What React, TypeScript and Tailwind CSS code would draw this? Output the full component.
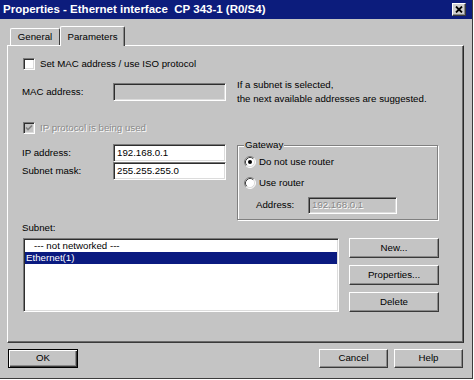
import React from 'react'

const sunken = "border border-t-[#7a7a7a] border-l-[#7a7a7a] border-b-white border-r-white shadow-[inset_1px_1px_0_#2e2e2e,inset_-1px_-1px_0_#dcdcdc]"
const raised = "border border-t-white border-l-white border-b-[#3a3a3a] border-r-[#3a3a3a] shadow-[inset_-1px_-1px_0_#8a8a8a]"

function Checkbox({ checked, disabled }: { checked?: boolean; disabled?: boolean }) {
  return (
    <span className={`${sunken} w-[12px] h-[12px] shrink-0 flex items-center justify-center ${disabled ? 'bg-[#c4c4c4]' : 'bg-white'}`}>
      {checked && (
        <svg width="8" height="8" viewBox="0 0 8 8">
          <path d="M1 3.5 L3 5.5 L7 1.5" stroke={disabled ? '#808080' : '#000'} strokeWidth="1.6" fill="none" />
        </svg>
      )}
    </span>
  )
}

function Radio({ checked }: { checked?: boolean }) {
  return (
    <svg width="12" height="12" viewBox="0 0 12 12" className="shrink-0">
      <circle cx="6" cy="6" r="5" fill="#fff" />
      <path d="M2.11 9.89 A5.5 5.5 0 0 1 9.89 2.11" stroke="#808080" fill="none" />
      <path d="M2.82 9.18 A4.5 4.5 0 0 1 9.18 2.82" stroke="#404040" fill="none" />
      <path d="M9.89 2.11 A5.5 5.5 0 0 1 2.11 9.89" stroke="#fff" fill="none" />
      <path d="M9.18 2.82 A4.5 4.5 0 0 1 2.82 9.18" stroke="#dcdcdc" fill="none" />
      {checked && <circle cx="6" cy="6" r="2" fill="#000" />}
    </svg>
  )
}

function Btn({ label, w, h, def }: { label: string; w: string; h: string; def?: boolean }) {
  const cls = def
    ? "border border-black shadow-[inset_1px_1px_0_#fff,inset_-1px_-1px_0_#3a3a3a,inset_-2px_-2px_0_#8a8a8a]"
    : raised
  return <div className={`${cls} ${w} ${h} bg-[#c4c4c4] flex items-center justify-center`}>{label}</div>
}

export default function App() {
  return (
    <div className="w-[473px] h-[379px] bg-[#c4c4c4] border-r border-b border-[#3c3c3c] flex flex-col overflow-hidden font-['Liberation_Sans',Arial,sans-serif] text-[9.7px] text-black">
      {/* title bar */}
      <div className="h-[19px] bg-[#0c1c7c] pl-[3px] pr-[6px] flex items-center justify-between">
        <span className="text-white font-bold text-[11.5px] whitespace-pre">Properties - Ethernet interface  CP 343-1 (R0/S4)</span>
        <div className={`${raised} w-[14px] h-[13px] bg-[#d0d0d0] flex items-center justify-center`}>
          <svg width="8" height="7" viewBox="0 0 8 7">
            <path d="M1 0.5 L7 6.5 M7 0.5 L1 6.5" stroke="#000" strokeWidth="1.8" />
          </svg>
        </div>
      </div>

      {/* tabs */}
      <div className="ml-[7px] mt-[7px] flex items-end h-[20px] pl-[3px]">
        <div className="h-[17px] w-[50px] border-t border-l border-white border-r border-r-[#3a3a3a] rounded-t-[2px] flex items-center justify-center mb-[1px]">
          General
        </div>
        <div className="relative z-10 h-[20px] w-[65px] bg-[#c4c4c4] border-t border-l border-white border-r border-r-[#3a3a3a] shadow-[inset_-1px_0_0_#8a8a8a] rounded-t-[2px] flex items-start justify-center pt-[3px]">
          Parameters
        </div>
      </div>

      {/* panel */}
      <div className="ml-[7px] mt-[-1px] w-[457px] h-[298px] border border-t-white border-l-white border-b-[#3a3a3a] border-r-[#2a2a2a] shadow-[inset_-1px_-1px_0_#6a6a6a] pl-[14px] flex flex-col">
        <div className="mt-[12px] h-[12px] flex items-center gap-[5px] pl-[1px]">
          <Checkbox />
          <span>Set MAC address / use ISO protocol</span>
        </div>

        <div className="mt-[8px] flex items-start">
          <span className="w-[91px] mt-[5px] leading-[18px]">MAC address:</span>
          <div className={`${sunken} w-[113px] h-[18px] mt-[5px] bg-[#c4c4c4]`} />
          <div className="ml-[11px] leading-[14px]">
            <div>If a subnet is selected,</div>
            <div>the next available addresses are suggested.</div>
          </div>
        </div>

        <div className="mt-[16px] h-[12px] flex items-center gap-[5px] pl-[1px]">
          <Checkbox checked disabled />
          <span className="text-[#8a8a8a] [text-shadow:1px_1px_0_#fff]">IP protocol is being used</span>
        </div>

        <div className="mt-[5px] flex items-start">
          <div className="mt-[5px] flex flex-col">
            <div className="flex h-[18px] items-center">
              <span className="w-[91px]">IP address:</span>
              <div className={`${sunken} w-[113px] h-[18px] bg-white pl-[3px] flex items-center`}>192.168.0.1</div>
            </div>
            <div className="flex h-[18px] items-center">
              <span className="w-[91px]">Subnet mask:</span>
              <div className={`${sunken} w-[113px] h-[18px] bg-white pl-[3px] flex items-center`}>255.255.255.0</div>
            </div>
          </div>

          <div className="relative ml-[11px] mt-[6px] w-[201px] h-[75px] border border-[#808080] shadow-[1px_1px_0_#fff,inset_1px_1px_0_#fff] pt-[10px] pl-[6px] flex flex-col">
            <span className="absolute -top-[7px] left-[6px] px-[1px] bg-[#c4c4c4] leading-[12px]">Gateway</span>
            <div className="h-[12px] flex items-center gap-[3px]">
              <Radio checked />
              <span>Do not use router</span>
            </div>
            <div className="mt-[9px] h-[12px] flex items-center gap-[3px]">
              <Radio />
              <span>Use router</span>
            </div>
            <div className="mt-[8px] h-[17px] flex items-center pl-[12px]">
              <span className="w-[52px]">Address:</span>
              <div className={`${sunken} w-[89px] h-[17px] bg-[#c4c4c4] pl-[3px] flex items-center text-[#8a8a8a] [text-shadow:1px_1px_0_#fff]`}>192.168.0.1</div>
            </div>
          </div>
        </div>

        <div className="mt-[2px] leading-[12px]">Subnet:</div>

        <div className="mt-[4px] flex items-start">
          <div className={`${sunken} ml-[1px] w-[316px] h-[74px] bg-white pt-[1px] px-[1px] flex flex-col`}>
            <div className="h-[12px] leading-[12px] pl-[9px]">--- not networked ---</div>
            <div className="h-[12px] leading-[12px] pl-[1px] bg-[#0a1a80] text-white">Ethernet(1)</div>
          </div>
          <div className="ml-[10px] flex flex-col gap-[7px]">
            <Btn label="New..." w="w-[90px]" h="h-[20px]" />
            <Btn label="Properties..." w="w-[90px]" h="h-[20px]" />
            <Btn label="Delete" w="w-[90px]" h="h-[20px]" />
          </div>
        </div>
      </div>

      {/* bottom buttons */}
      <div className="mt-[6px] pl-[8px] pr-[9px] flex justify-between">
        <Btn label="OK" w="w-[70px]" h="h-[19px]" def />
        <div className="flex gap-[6px]">
          <Btn label="Cancel" w="w-[69px]" h="h-[19px]" />
          <Btn label="Help" w="w-[69px]" h="h-[19px]" />
        </div>
      </div>
    </div>
  )
}
